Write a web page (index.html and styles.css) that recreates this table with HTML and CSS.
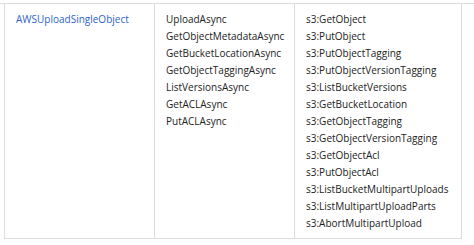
FILE: index.html
```html
<!DOCTYPE html>
<html lang="en">
<head>
  <meta charset="UTF-8">
  <meta name="viewport" content="width=device-width, initial-scale=1.0">
  <title>Permissions</title>
  <link rel="stylesheet" href="styles.css">
</head>
<body>
  <div class="rule"></div>
  <table class="perm-table">
    <tbody>
      <tr>
        <td class="col-name"><a href="#">AWSUploadSingleObject</a></td>
        <td class="col-api">
          <div>UploadAsync</div>
          <div>GetObjectMetadataAsync</div>
          <div>GetBucketLocationAsync</div>
          <div>GetObjectTaggingAsync</div>
          <div>ListVersionsAsync</div>
          <div>GetACLAsync</div>
          <div>PutACLAsync</div>
        </td>
        <td class="col-perm">
          <div>s3:GetObject</div>
          <div>s3:PutObject</div>
          <div>s3:PutObjectTagging</div>
          <div>s3:PutObjectVersionTagging</div>
          <div>s3:ListBucketVersions</div>
          <div>s3:GetBucketLocation</div>
          <div>s3:GetObjectTagging</div>
          <div>s3:GetObjectVersionTagging</div>
          <div>s3:GetObjectAcl</div>
          <div>s3:PutObjectAcl</div>
          <div>s3:ListBucketMultipartUploads</div>
          <div>s3:ListMultipartUploadParts</div>
          <div>s3:AbortMultipartUpload</div>
        </td>
      </tr>
    </tbody>
  </table>
</body>
</html>
```

FILE: styles.css
```css
body {
  margin: 0;
  padding-top: 3px;
  font-family: "Open Sans", "Noto Sans", sans-serif;
  font-size: 10px;
  line-height: 17px;
  color: #222;
  background: #fff;
}

.rule {
  border-top: 1px solid #dcdcdc;
}

.perm-table {
  margin-left: 4px;
  border-collapse: collapse;
  width: 458px;
  table-layout: fixed;
}

.perm-table td {
  box-sizing: border-box;
  vertical-align: top;
  padding: 7px 10px 6px 11px;
  border-left: 1px solid #dcdcdc;
  border-right: 1px solid #dcdcdc;
  border-bottom: 1px solid #dcdcdc;
}

.col-name {
  width: 150px;
}

.col-api {
  width: 140px;
}

.col-perm {
  padding-left: 12px;
}

.col-name a {
  color: #2d63c8;
  text-decoration: none;
}
```
